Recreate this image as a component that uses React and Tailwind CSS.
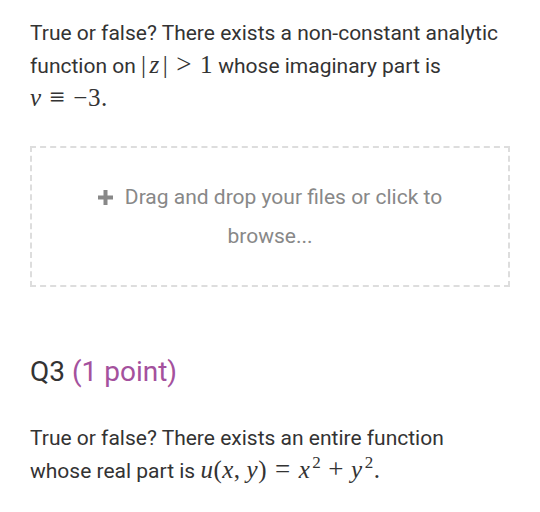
import React from 'react';

const serif = { fontFamily: '"Liberation Serif", "DejaVu Serif", serif' };

const M = ({ children, className = '' }) => <span className={`italic ${className}`}>{children}</span>;
const Math = ({ children }) => (
  <span className="text-[25px] leading-none whitespace-nowrap tracking-[0.5px]" style={serif}>{children}</span>
);
const Rel = ({ children }) => <span className="mx-[8px] text-[27px]">{children}</span>;
const Bin = ({ children }) => <span className="mx-[7px] text-[27px]">{children}</span>;
const Sup = ({ children }) => <span className="relative -top-[10px] ml-[2px] text-[17px]">{children}</span>;

export default function App() {
  return (
    <div className="w-[540px] h-[512px] overflow-hidden bg-white px-[30px] pt-[17px] text-[#333] font-['Roboto',sans-serif]">
      <p className="text-[21px] leading-[33px]">
        True or false? There exists a non-constant analytic function on{' '}
        <Math>|<M className="mx-[3px]">z</M>|<Rel>&gt;</Rel>1</Math> whose imaginary part is{' '}
        <Math><M>v</M><Rel>≡</Rel>−3.</Math>
      </p>

      <div className="mt-[30px] h-[141px] border-2 border-dashed border-[#ddd] flex items-center justify-center px-10">
        <p className="text-center text-[21px] leading-[39px] text-[#888]">
          <span className="inline-block align-[-1px] mr-3">
            <svg width="15" height="15" viewBox="0 0 15 15">
              <path d="M5.5 0h4v5.5H15v4H9.5V15h-4V9.5H0v-4h5.5z" fill="#888" />
            </svg>
          </span>
          Drag and drop your files or click to browse...
        </p>
      </div>

      <h2 className="mt-[67px] text-[28px] leading-[36px] text-[#333]">
        Q3 <span className="text-[#a4519d]">(1 point)</span>
      </h2>

      <p className="mt-[32px] text-[21px] leading-[33px]">
        True or false? There exists an entire function whose real part is{' '}
        <Math>
          <M>u</M>(<M>x</M>,<span className="ml-[6px]" /><M>y</M>)<Rel>=</Rel><M>x</M>
          <Sup>2</Sup>
          <Bin>+</Bin><M>y</M>
          <Sup>2</Sup>.
        </Math>
      </p>
    </div>
  );
}
